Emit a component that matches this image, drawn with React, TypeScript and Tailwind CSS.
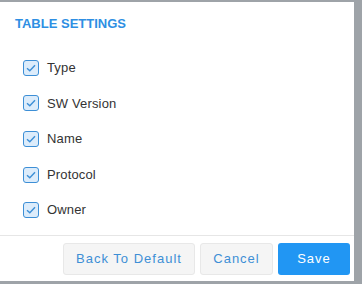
import React, { useState } from 'react';

const columns = ['Type', 'SW Version', 'Name', 'Protocol', 'Owner'];

function Check({ checked }: { checked: boolean }) {
  return (
    <span
      className={`flex h-[16px] w-[16px] items-center justify-center rounded-[3px] border ${
        checked ? 'border-[#3d8fd6] bg-[#dcecfb]' : 'border-gray-400 bg-white'
      }`}
    >
      {checked && (
        <svg width="10" height="8" viewBox="0 0 10 8" fill="none">
          <path d="M1 4.2 L3.8 6.8 L9 1.2" stroke="#3d8fd6" strokeWidth="1.4" />
        </svg>
      )}
    </span>
  );
}

export default function App() {
  const [checked, setChecked] = useState<boolean[]>(columns.map(() => true));

  const toggle = (i: number) => {
    setChecked(checked.map((c, j) => (j === i ? !c : c)));
  };

  return (
    <div
      className="h-[284px] w-[362px] bg-[#9ea3a8] pt-[2px] pb-[3px] pr-[8px]"
      style={{ fontFamily: '"Liberation Sans", Arial, sans-serif' }}
    >
      <div className="flex h-full flex-col bg-white">
        <div className="px-[15px] pt-[14px] text-[13px] leading-[16px] font-bold text-[#2e8fe3]">
          TABLE SETTINGS
        </div>
        <div className="flex flex-col pt-[18px] pl-[23px]">
          {columns.map((col, i) => (
            <label
              key={col}
              className="flex h-[35.6px] cursor-pointer items-center gap-[8px]"
              onClick={() => toggle(i)}
            >
              <Check checked={checked[i]} />
              <span className="text-[13px] tracking-[0.15px] text-[#333]">{col}</span>
            </label>
          ))}
        </div>
        <div className="mt-auto flex justify-end gap-[5px] border-t border-[#e6e6e6] px-[4px] pt-[7px] pb-[6px]">
          <button className="h-[32px] w-[132px] rounded-[3px] border border-[#e8e8e8] bg-[#f5f5f5] text-[13px] tracking-[1px] text-[#3d8fd6]">
            Back To Default
          </button>
          <button className="h-[32px] w-[73px] rounded-[3px] border border-[#e8e8e8] bg-[#f5f5f5] text-[13px] tracking-[1px] text-[#3d8fd6]">
            Cancel
          </button>
          <button className="h-[32px] w-[72px] rounded-[3px] bg-[#2196f3] text-[13px] tracking-[1px] text-white">
            Save
          </button>
        </div>
      </div>
    </div>
  );
}
